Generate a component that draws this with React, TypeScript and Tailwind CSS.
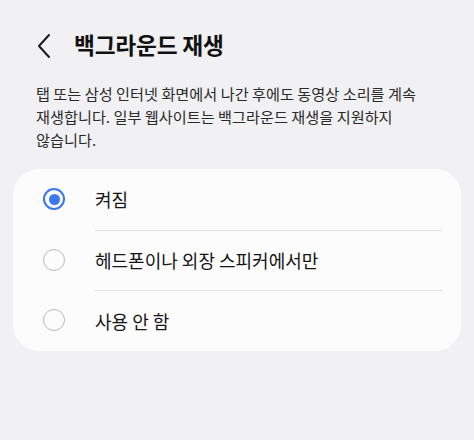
import React from "react";

const options = [
  { label: "켜짐", checked: true },
  { label: "헤드폰이나 외장 스피커에서만", checked: false },
  { label: "사용 안 함", checked: false },
];

function Radio({ checked }: { checked: boolean }) {
  return checked ? (
    <div className="flex h-[22px] w-[22px] items-center justify-center rounded-full border-[2.5px] border-[#3b78ee]">
      <div className="h-[11px] w-[11px] rounded-full bg-[#3b78ee]" />
    </div>
  ) : (
    <div className="h-[22px] w-[22px] rounded-full border-[1.5px] border-[#b9b9bc]" />
  );
}

export default function App() {
  return (
    <div
      className="h-[440px] w-[474px] overflow-hidden bg-[#f1f1f4] text-[#111]"
      style={{ fontFamily: '"Noto Sans CJK KR", "Noto Sans", sans-serif' }}
    >
      <header className="flex h-[90px] items-start pl-[36px] pt-[30px]">
        <svg width="16" height="26" viewBox="0 0 16 26" className="mt-[3px]">
          <path d="M13 2 L3 13 L13 24" fill="none" stroke="#1a1a1a" strokeWidth="2" strokeLinecap="round" strokeLinejoin="round" />
        </svg>
        <h1 className="ml-[22px] text-[22.7px] font-semibold leading-[30px] tracking-[-0.2px]">백그라운드 재생</h1>
      </header>

      <p className="-mt-[8px] whitespace-nowrap px-[36px] text-[15.2px] leading-[23px] text-[#2a2a2a]">
        탭 또는 삼성 인터넷 화면에서 나간 후에도 동영상 소리를 계속
        <br />
        재생합니다. 일부 웹사이트는 백그라운드 재생을 지원하지
        <br />
        않습니다.
      </p>

      <div className="mx-[13px] mt-[18px] rounded-[26px] bg-[#fcfcfc]">
        {options.map((o, i) => (
          <div key={o.label} className="flex h-[60.5px] items-center">
            <div className="flex w-[82px] justify-center">
              <Radio checked={o.checked} />
            </div>
            <div
              className={
                "mr-[19px] flex h-full flex-1 items-center " +
                (i > 0 ? "border-t border-[#e2e2e4]" : "")
              }
            >
              <span className="text-[18px] leading-none text-[#151515]">{o.label}</span>
            </div>
          </div>
        ))}
      </div>
    </div>
  );
}
